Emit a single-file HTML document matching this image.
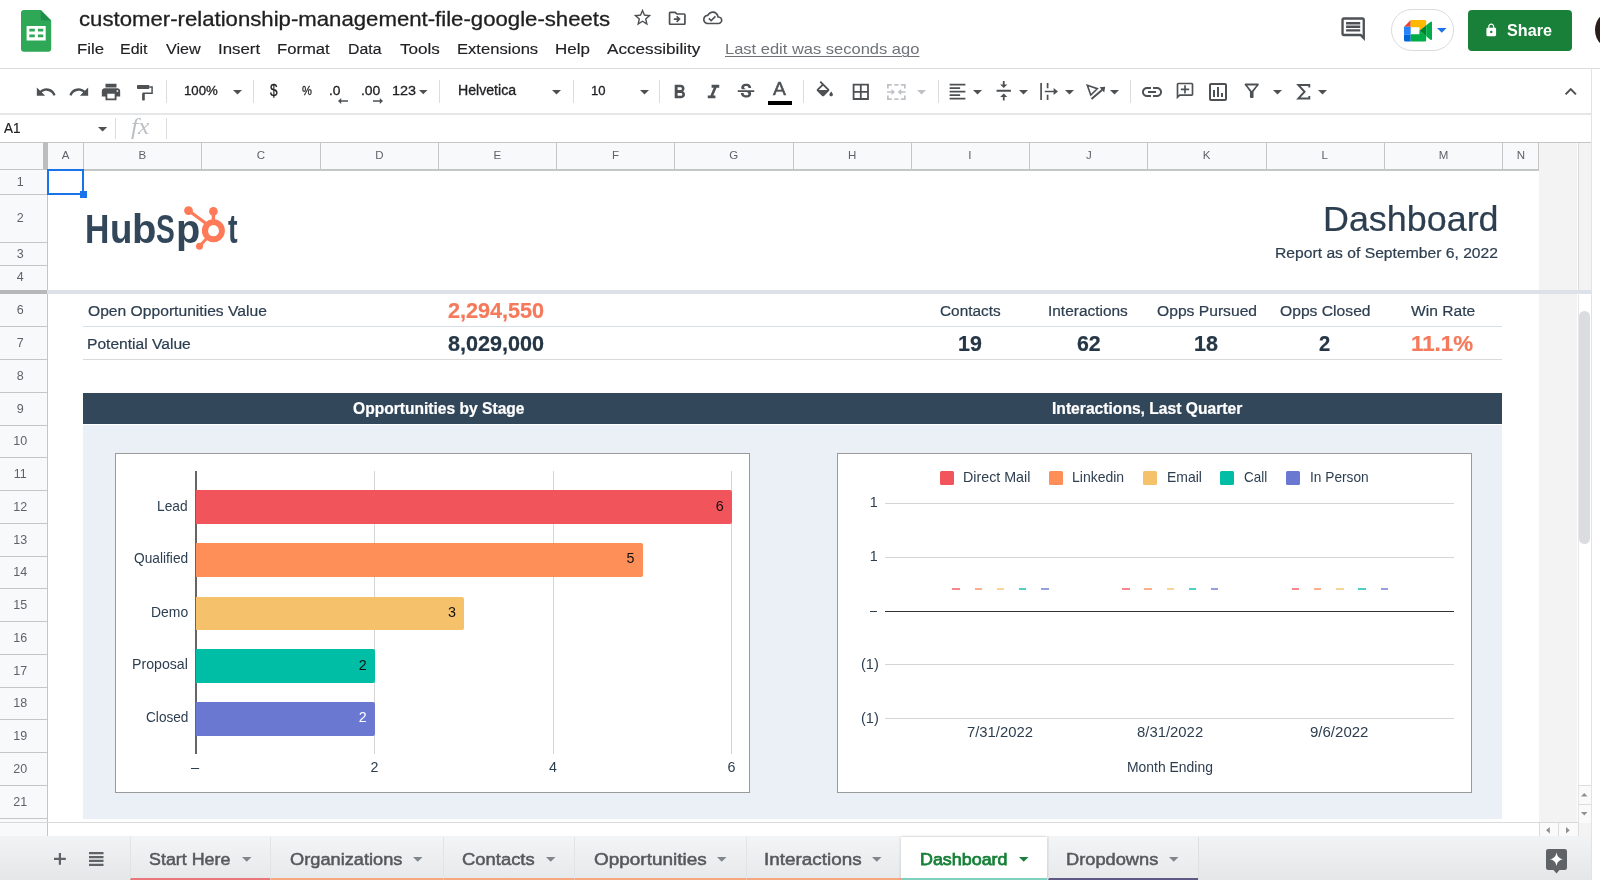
<!DOCTYPE html>
<html lang="en">
<head>
<meta charset="utf-8">
<title>customer-relationship-management-file-google-sheets - Google Sheets</title>
<style>
*{box-sizing:border-box;margin:0;padding:0}
html,body{width:1600px;height:880px;overflow:hidden;background:#fff;font-family:"Liberation Sans",Arial,sans-serif;color:#202124}
.t{position:absolute;display:block;white-space:nowrap;line-height:1;transform-origin:0 0}
.ic{position:absolute;display:block;overflow:visible}
.sep{position:absolute;width:1px;background:#dadce0}
.hl{position:absolute;height:1px}
.vl{position:absolute;width:1px}
#sheet-content>.t{-webkit-text-stroke-width:.22px}
#docs-menubar .t{-webkit-text-stroke-width:.15px}
</style>
</head>
<body>
<div id="docs-chrome" style="position:absolute;left:0;top:0;width:1600px;height:880px;will-change:transform">
<header id="docs-titlebar" style="position:absolute;left:0px;top:0px;width:1600px;height:68.5px;background:#fff;border-bottom:1px solid #dadce0;">
<svg class="ic" style="left:21.1px;top:9.5px;width:30.2px;height:41.7px;" viewBox="0 0 30.2 41.7"><path fill="#2ea856" d="M3 0h16.700l10.500 10.500v28.200a3 3 0 0 1-3 3H3a3 3 0 0 1-3-3V3a3 3 0 0 1 3-3z"/><path fill="#1e8f4a" d="M19.700 0l10.500 10.500h-8a2.500 2.500 0 0 1-2.500-2.500z"/><path fill="#fff" fill-rule="evenodd" d="M5.600 16.100h19.100v14.300H5.600zM8.300 18.800v2.800h5.500v-2.800zM16.900 18.800v2.800h5.400v-2.800zM8.300 24.500v2.800h5.500v-2.800zM16.900 24.500v2.800h5.400v-2.800z"/></svg>
<span class="t" style="left:78.9px;top:8.5px;color:#1f1f1f;font-size:20.2px;transform:scaleX(1.0982);-webkit-text-stroke:.3px #1f1f1f;">customer-relationship-management-file-google-sheets</span>
<svg class="ic" style="left:632.2px;top:7.2px;width:21px;height:21px;" viewBox="0 0 24 24"><path fill="#4e5154" d="M22 9.240l-7.190-.620L12 2 9.190 8.630 2 9.240l5.460 4.730L5.820 21 12 17.270 18.180 21l-1.630-7.030L22 9.240zM12 15.400l-3.760 2.270 1-4.280-3.320-2.880 4.380-.380L12 6.100l1.710 4.040 4.380.380-3.320 2.880 1 4.280L12 15.400z"/></svg>
<svg class="ic" style="left:667px;top:7.5px;width:20.5px;height:20.5px;" viewBox="0 0 24 24"><path fill="#4e5154" d="M20 6h-8l-2-2H4c-1.100 0-2 .900-2 2v12c0 1.100.900 2 2 2h16c1.100 0 2-.900 2-2V8c0-1.100-.900-2-2-2zm0 12H4V6h5.170l2 2H20v10zm-7.840-4H8v-2h4.160l-1.590-1.590L11.990 9 16 13.010 11.990 17l-1.410-1.410L12.160 14z"/></svg>
<svg class="ic" style="left:703.3px;top:7.6px;width:19.5px;height:19.5px;" viewBox="0 0 24 24"><path fill="#4e5154" d="M19.350 10.040C18.670 6.590 15.640 4 12 4 9.110 4 6.600 5.640 5.350 8.040 2.340 8.360 0 10.910 0 14c0 3.310 2.690 6 6 6h13c2.760 0 5-2.240 5-5 0-2.640-2.050-4.780-4.650-4.960zM19 18H6c-2.210 0-4-1.790-4-4 0-2.050 1.530-3.760 3.560-3.970l1.070-.110.500-.950C8.080 7.140 9.940 6 12 6c2.620 0 4.880 1.860 5.390 4.430l.300 1.500 1.530.110c1.560.100 2.780 1.410 2.780 2.960 0 1.650-1.350 3-3 3zm-9-3.820l-2.090-2.090L6.500 13.500 10 17l6.010-6.010-1.410-1.410z"/></svg>
<nav id="docs-menubar"><span class="t" style="left:77.0px;top:41.3px;color:#202124;font-size:15.2px;transform:scaleX(1.1031);">File</span><span class="t" style="left:120.15px;top:41.3px;color:#202124;font-size:15.2px;transform:scaleX(1.052);">Edit</span><span class="t" style="left:165.9px;top:41.3px;color:#202124;font-size:15.2px;transform:scaleX(1.065);">View</span><span class="t" style="left:217.59px;top:41.3px;color:#202124;font-size:15.2px;transform:scaleX(1.1095);">Insert</span><span class="t" style="left:277.2px;top:41.3px;color:#202124;font-size:15.2px;transform:scaleX(1.0965);">Format</span><span class="t" style="left:347.76px;top:41.3px;color:#202124;font-size:15.2px;transform:scaleX(1.0432);">Data</span><span class="t" style="left:399.5px;top:41.3px;color:#202124;font-size:15.2px;transform:scaleX(1.1238);">Tools</span><span class="t" style="left:456.61px;top:41.3px;color:#202124;font-size:15.2px;transform:scaleX(1.0923);">Extensions</span><span class="t" style="left:554.99px;top:41.3px;color:#202124;font-size:15.2px;transform:scaleX(1.1145);">Help</span><span class="t" style="left:606.8px;top:41.3px;color:#202124;font-size:15.2px;transform:scaleX(1.1286);">Accessibility</span></nav>
<span class="t" style="left:725.3px;top:41.3px;color:#6f7378;font-size:15px;transform:scaleX(1.0996);text-decoration:underline;text-decoration-thickness:1px;text-underline-offset:1.5px;">Last edit was seconds ago</span>
<svg class="ic" style="left:1339.1px;top:15.3px;width:28.3px;height:28.3px;" viewBox="0 0 24 24"><path fill="#4e5154" d="M21.990 4c0-1.100-.890-2-1.990-2H4c-1.100 0-2 .900-2 2v12c0 1.100.900 2 2 2h14l4 4-.010-18zM20 4v13.170L18.830 16H4V4h16zM6 12h12v2H6zm0-3h12v2H6zm0-3h12v2H6z"/></svg>
<div style="position:absolute;left:1391px;top:9px;width:63px;height:42px;border:1px solid #dadce0;border-radius:21px;background:#fff;"></div>
<svg class="ic" style="left:1404px;top:19.7px;width:28px;height:21.6px;" viewBox="0 0 28 21.6"><path fill="#ea4335" d="M6.700 0L0 6.700h6.700z"/><path fill="#2684fc" d="M0 6.700h6.700v8.200H0z"/><path fill="#0066da" d="M0 14.900h6.700v6.700H1.500A1.500 1.500 0 0 1 0 20.100z"/><path fill="#ffba00" d="M6.700 0h14a1.500 1.500 0 0 1 1.500 1.500v3.800l-6.800 5.500V7.300H6.700z"/><path fill="#00ac47" d="M6.700 14.300h8.700v-3.500l6.800 5.500v3.800a1.500 1.500 0 0 1-1.500 1.500h-14z"/><path fill="#00832d" d="M15.400 10.800l6.800-5.500v11z"/><path fill="#00ac47" d="M22.200 5.300l4.500-3.600c.5-.4 1.300 0 1.300.6v17c0 .7-.8 1-1.300.6l-4.500-3.600z"/></svg>
<svg class="ic" style="left:1436.95px;top:27.93px;width:9.5px;height:4.75px;" viewBox="0 0 9.5 4.75"><path fill="#1a73e8" d="M0 0h9.5l-4.75 4.75z"/></svg>
<div style="position:absolute;left:1468px;top:9.5px;width:104px;height:41.5px;background:#188038;border-radius:4px;"></div>
<svg class="ic" style="left:1483.5px;top:22.9px;width:14.5px;height:14.5px;" viewBox="0 0 24 24"><path fill="#fff" d="M18 8h-1V6c0-2.760-2.240-5-5-5S7 3.240 7 6v2H6c-1.100 0-2 .900-2 2v10c0 1.100.900 2 2 2h12c1.100 0 2-.900 2-2V10c0-1.100-.900-2-2-2zm-6 9c-1.100 0-2-.900-2-2s.900-2 2-2 2 .900 2 2-.900 2-2 2zm3.100-9H8.900V6c0-1.710 1.390-3.100 3.100-3.100 1.710 0 3.100 1.390 3.100 3.100v2z"/></svg>
<span class="t" style="left:1507.3px;top:21.8px;color:#fff;font-size:17px;font-weight:700;transform:scaleX(0.951);">Share</span>
<div style="position:absolute;left:1594.5px;top:10px;width:40px;height:40px;border-radius:50%;background:#2b1d1a;"></div>
</header>
<div id="docs-toolbar" style="position:absolute;left:0px;top:69px;width:1591px;height:46px;background:#fff;border-bottom:2px solid #e4e6e8;">
<svg class="ic" style="left:34.5px;top:11.5px;width:22px;height:22px;" viewBox="0 0 24 24"><path fill="#4e5154" d="M12.5 8c-2.65 0-5.05.99-6.9 2.6L2 7v9h9l-3.62-3.62c1.39-1.16 3.16-1.88 5.12-1.88 3.54 0 6.55 2.31 7.6 5.5l2.37-.78C21.08 11.03 17.15 8 12.5 8z"/></svg>
<svg class="ic" style="left:67.8px;top:11.5px;width:22px;height:22px;" viewBox="0 0 24 24"><path fill="#4e5154" d="M18.4 10.6C16.55 8.99 14.15 8 11.5 8c-4.65 0-8.58 3.03-9.96 7.22L3.9 16c1.05-3.19 4.05-5.5 7.6-5.5 1.95 0 3.73.72 5.12 1.88L13 16h9V7l-3.6 3.6z"/></svg>
<svg class="ic" style="left:100px;top:11.95px;width:22px;height:22px;" viewBox="0 0 24 24"><path fill="#4e5154" d="M19 8H5c-1.66 0-3 1.34-3 3v6h4v4h12v-4h4v-6c0-1.66-1.34-3-3-3zm-3 11H8v-5h8v5zm3-7c-.55 0-1-.45-1-1s.45-1 1-1 1 .45 1 1-.45 1-1 1zm-1-9H6v4h12V3z"/></svg>
<svg class="ic" style="left:136.75px;top:15.6px;width:16px;height:15.4px;" viewBox="0 0 16 15.4"><rect fill="#4e5154" x="0" y="0" width="12.300" height="4" rx=".800"/><path fill="none" stroke="#4e5154" stroke-width="1.500" d="M12.300 2H15.100V8.300H6.400V9"/><rect fill="#4e5154" x="5.100" y="8.300" width="2.700" height="7.100" rx=".600"/></svg>
<i class="sep" style="left:165.5px;top:11.299999999999997px;height:22.500px"></i>
<i class="sep" style="left:252.5px;top:11.299999999999997px;height:22.500px"></i>
<i class="sep" style="left:438.8px;top:11.299999999999997px;height:22.500px"></i>
<i class="sep" style="left:572.5px;top:11.299999999999997px;height:22.500px"></i>
<i class="sep" style="left:659.3px;top:11.299999999999997px;height:22.500px"></i>
<i class="sep" style="left:803px;top:11.299999999999997px;height:22.500px"></i>
<i class="sep" style="left:937.5px;top:11.299999999999997px;height:22.500px"></i>
<i class="sep" style="left:1130px;top:11.299999999999997px;height:22.500px"></i>
<span class="t" style="left:183.83px;top:15.1px;color:#202124;font-size:13.6px;transform:scaleX(0.9709);-webkit-text-stroke:.3px #202124;">100%</span>
<svg class="ic" style="left:233.1px;top:20.55px;width:9px;height:4.5px;" viewBox="0 0 9 4.5"><path fill="#4e5154" d="M0 0h9l-4.5 4.5z"/></svg>
<span class="t" style="left:270.3px;top:12.75px;color:#202124;font-size:16.5px;transform:scaleX(0.8222);-webkit-text-stroke:.3px #202124;">$</span>
<span class="t" style="left:301.8px;top:15.1px;color:#202124;font-size:13.6px;transform:scaleX(0.8167);-webkit-text-stroke:.3px #202124;">%</span>
<span class="t" style="left:328.59px;top:15.1px;color:#202124;font-size:13.6px;transform:scaleX(1.0114);-webkit-text-stroke:.3px #202124;">.0</span>
<svg class="ic" style="left:337.5px;top:29px;width:10px;height:6px;" viewBox="0 0 10 6"><path fill="#4e5154" d="M3.200 0L0 3l3.200 3V3.700H10V2.300H3.200z"/></svg>
<span class="t" style="left:360.77px;top:15.1px;color:#202124;font-size:13.6px;transform:scaleX(1.0253);-webkit-text-stroke:.3px #202124;">.00</span>
<svg class="ic" style="left:372.8px;top:29px;width:10px;height:6px;" viewBox="0 0 10 6"><path fill="#4e5154" d="M6.800 0L10 3 6.800 6V3.700H0V2.300h6.800z"/></svg>
<span class="t" style="left:391.54px;top:15.1px;color:#202124;font-size:13.6px;transform:scaleX(1.0606);-webkit-text-stroke:.3px #202124;">123</span>
<svg class="ic" style="left:418.85px;top:20.67px;width:8.5px;height:4.25px;" viewBox="0 0 8.5 4.25"><path fill="#4e5154" d="M0 0h8.5l-4.25 4.25z"/></svg>
<span class="t" style="left:457.78px;top:15.2px;color:#202124;font-size:13.8px;transform:scaleX(1.0237);-webkit-text-stroke:.3px #202124;">Helvetica</span>
<svg class="ic" style="left:552.3px;top:20.55px;width:9px;height:4.5px;" viewBox="0 0 9 4.5"><path fill="#4e5154" d="M0 0h9l-4.5 4.5z"/></svg>
<span class="t" style="left:590.54px;top:15.1px;color:#202124;font-size:13.6px;transform:scaleX(0.9615);-webkit-text-stroke:.3px #202124;">10</span>
<svg class="ic" style="left:639.9px;top:20.55px;width:9px;height:4.5px;" viewBox="0 0 9 4.5"><path fill="#4e5154" d="M0 0h9l-4.5 4.5z"/></svg>
<svg class="ic" style="left:667.5px;top:12px;width:23px;height:23px;" viewBox="0 0 24 24"><path fill="#4e5154" d="M15.6 10.79c.97-.67 1.65-1.77 1.65-2.79 0-2.26-1.75-4-4-4H7v14h7.04c2.09 0 3.71-1.7 3.71-3.79 0-1.52-.86-2.82-2.15-3.42zM10 6.5h3c.83 0 1.5.67 1.5 1.5s-.67 1.5-1.5 1.5h-3v-3zm3.5 9H10v-3h3.5c.83 0 1.5.67 1.5 1.5s-.67 1.5-1.5 1.5z"/></svg>
<svg class="ic" style="left:701.5px;top:12px;width:23px;height:23px;" viewBox="0 0 24 24"><path fill="#4e5154" d="M10 4v3h2.21l-3.42 8H6v3h8v-3h-2.21l3.42-8H18V4z"/></svg>
<svg class="ic" style="left:735.4px;top:12.3px;width:22px;height:22px;" viewBox="0 0 24 24"><path fill="#4e5154" d="M7.24 8.75c-.26-.48-.39-1.03-.39-1.67 0-.61.13-1.16.4-1.67.26-.5.63-.93 1.11-1.29.48-.35 1.05-.63 1.7-.83.66-.19 1.39-.29 2.18-.29.81 0 1.54.11 2.21.34.66.22 1.23.54 1.69.94.47.4.83.88 1.08 1.43.25.55.38 1.15.38 1.81h-3.01c0-.31-.05-.59-.15-.85-.09-.27-.24-.49-.44-.68-.2-.19-.45-.33-.75-.44-.3-.1-.66-.16-1.06-.16-.39 0-.74.04-1.03.13-.29.09-.53.21-.72.36-.19.16-.34.34-.44.55-.1.21-.15.43-.15.66 0 .48.25.88.74 1.21.38.25.77.48 1.41.7H7.39c-.05-.08-.11-.17-.15-.25zM21 12v-2H3v2h9.62c.18.07.4.14.55.2.37.17.66.34.87.51.21.17.35.36.43.57.07.2.11.43.11.69 0 .23-.05.45-.14.66-.09.2-.23.38-.42.53-.19.15-.42.26-.71.35-.29.08-.63.13-1.01.13-.43 0-.83-.04-1.18-.13s-.66-.23-.91-.42c-.25-.19-.45-.44-.59-.75-.14-.31-.25-.76-.25-1.21H6.4c0 .55.08 1.13.24 1.58.16.45.37.85.65 1.21.28.35.6.66.98.92.37.26.78.48 1.22.65.44.17.9.3 1.38.39.48.08.96.13 1.44.13.8 0 1.53-.09 2.18-.28s1.21-.45 1.67-.79c.46-.34.82-.77 1.07-1.27s.38-1.07.38-1.71c0-.6-.1-1.14-.31-1.61-.05-.11-.11-.23-.17-.33H21z"/></svg>
<span class="t" style="left:773.3px;top:11.2px;color:#4e5154;font-size:18px;transform:scaleX(1.075);-webkit-text-stroke:.5px #4e5154;">A</span>
<div style="position:absolute;left:768.2px;top:32px;width:24px;height:4px;background:#000;"></div>
<svg class="ic" style="left:814.3px;top:12.3px;width:21.7px;height:21.7px;" viewBox="0 0 24 24"><path fill="#4e5154" d="M16.56 8.94L7.62 0 6.21 1.41l2.38 2.38-5.15 5.15c-.59.59-.59 1.54 0 2.12l5.5 5.5c.29.29.68.44 1.06.44s.77-.15 1.06-.44l5.5-5.5c.59-.58.59-1.53 0-2.12zM5.21 10L10 5.21 14.79 10H5.21zM19 11.5s-2 2.17-2 3.5c0 1.1.9 2 2 2s2-.9 2-2c0-1.33-2-3.5-2-3.5z"/></svg>
<svg class="ic" style="left:849.6px;top:11.6px;width:21.6px;height:21.6px;" viewBox="0 0 24 24"><path fill="#4e5154" d="M3 3v18h18V3H3zm8 16H5v-6h6v6zm0-8H5V5h6v6zm8 8h-6v-6h6v6zm0-8h-6V5h6v6z"/></svg>
<svg class="ic" style="left:886.9px;top:14.5px;width:18.7px;height:16px;" viewBox="0 0 18.7 16"><g fill="none" stroke="#bdc1c6" stroke-width="1.700"><path d="M.85 4.600V.85h4M7.300 .85h4.100M13.850 .85h4v3.750M.85 11.400v3.750h4M7.300 15.150h4.100M13.850 15.150h4v-3.750"/></g><path fill="#bdc1c6" d="M0 7.200h4.500V5.100L8 8 4.500 10.900V8.800H0zM18.700 7.200h-4.500V5.100L10.700 8l3.500 2.900V8.800h4.500z"/></svg>
<svg class="ic" style="left:917.3px;top:20.55px;width:9px;height:4.5px;" viewBox="0 0 9 4.5"><path fill="#bdc1c6" d="M0 0h9l-4.5 4.5z"/></svg>
<svg class="ic" style="left:947.4px;top:11.5px;width:21px;height:21px;" viewBox="0 0 24 24"><path fill="#4e5154" d="M15 15H3v2h12v-2zm0-8H3v2h12V7zM3 13h18v-2H3v2zm0 8h18v-2H3v2zM3 3v2h18V3H3z"/></svg>
<svg class="ic" style="left:973px;top:20.55px;width:9px;height:4.5px;" viewBox="0 0 9 4.5"><path fill="#4e5154" d="M0 0h9l-4.5 4.5z"/></svg>
<svg class="ic" style="left:993px;top:11.3px;width:21.5px;height:21.5px;" viewBox="0 0 24 24"><path fill="#4e5154" d="M8 19h3v4h2v-4h3l-4-4-4 4zm8-14h-3V1h-2v4H8l4 4 4-4zM4 11v2h16v-2H4z"/></svg>
<svg class="ic" style="left:1018.5px;top:20.55px;width:9px;height:4.5px;" viewBox="0 0 9 4.5"><path fill="#4e5154" d="M0 0h9l-4.5 4.5z"/></svg>
<svg class="ic" style="left:1040px;top:13.5px;width:18px;height:17px;" viewBox="0 0 18 17"><g fill="none" stroke="#4e5154" stroke-width="1.700"><path d="M1.100 0v17M7.600 0v5.200M7.600 11.800V17M4.800 8.500h11"/></g><path fill="#4e5154" d="M13.600 5l4.400 3.500-4.400 3.500z"/></svg>
<svg class="ic" style="left:1064.5px;top:20.55px;width:9px;height:4.5px;" viewBox="0 0 9 4.5"><path fill="#4e5154" d="M0 0h9l-4.5 4.5z"/></svg>
<svg class="ic" style="left:1086px;top:12.5px;width:19px;height:19px;" viewBox="0 0 19 19"><g fill="none" stroke="#4e5154" stroke-linejoin="miter"><path stroke-width="1.600" d="M1.300 3.300L11.300 6.700 4.800 13z"/><path stroke-width="2" d="M5.500 17L16.300 7.700"/></g><path fill="#4e5154" d="M13.600 5.300L19.200 4.800 18.200 10.400z"/></svg>
<svg class="ic" style="left:1110px;top:20.55px;width:9px;height:4.5px;" viewBox="0 0 9 4.5"><path fill="#4e5154" d="M0 0h9l-4.5 4.5z"/></svg>
<svg class="ic" style="left:1140px;top:10.5px;width:24px;height:24px;" viewBox="0 0 24 24"><path fill="#4e5154" d="M3.9 12c0-1.71 1.39-3.1 3.1-3.1h4V7H7c-2.76 0-5 2.24-5 5s2.24 5 5 5h4v-1.9H7c-1.71 0-3.1-1.39-3.1-3.1zM8 13h8v-2H8v2zm9-6h-4v1.9h4c1.71 0 3.1 1.39 3.1 3.1s-1.39 3.1-3.1 3.1h-4V17h4c2.76 0 5-2.24 5-5s-2.24-5-5-5z"/></svg>
<svg class="ic" style="left:1174.8px;top:12.4px;width:20px;height:20px;transform:scaleX(-1);" viewBox="0 0 24 24"><path fill="#4e5154" d="M22 4c0-1.1-.9-2-2-2H4c-1.1 0-2 .9-2 2v12c0 1.1.9 2 2 2h14l4 4V4zm-2 13.17L18.83 16H4V4h16v13.17zM13 5h-2v4H7v2h4v4h2v-4h4V9h-4z"/></svg>
<svg class="ic" style="left:1206.1px;top:10.6px;width:24px;height:24px;" viewBox="0 0 24 24"><path fill="#4e5154" d="M9 17H7v-7h2v7zm4 0h-2V7h2v10zm4 0h-2v-4h2v4zm2 2H5V5h14v14zm0-16H5c-1.1 0-2 .9-2 2v14c0 1.1.9 2 2 2h14c1.1 0 2-.9 2-2V5c0-1.1-.9-2-2-2z"/></svg>
<svg class="ic" style="left:1241.2px;top:11.3px;width:21.5px;height:21.5px;" viewBox="0 0 24 24"><path fill="#4e5154" d="M7 6h10l-5.01 6.3L7 6zm-2.75-.39C6.27 8.2 10 13 10 13v6c0 .55.45 1 1 1h2c.55 0 1-.45 1-1v-6s3.72-4.8 5.74-7.39c.51-.66.04-1.61-.79-1.61H5.04c-.83 0-1.3.95-.79 1.61z"/></svg>
<svg class="ic" style="left:1272.5px;top:20.55px;width:9px;height:4.5px;" viewBox="0 0 9 4.5"><path fill="#4e5154" d="M0 0h9l-4.5 4.5z"/></svg>
<svg class="ic" style="left:1297px;top:14.7px;width:13px;height:15.5px;" viewBox="0 0 13 15.5"><path fill="none" stroke="#4e5154" stroke-width="1.900" stroke-linejoin="miter" d="M12.300 3.400V1H1.300l6.300 6.750L1.300 14.500h11v-2.400"/></svg>
<svg class="ic" style="left:1318px;top:20.55px;width:9px;height:4.5px;" viewBox="0 0 9 4.5"><path fill="#4e5154" d="M0 0h9l-4.5 4.5z"/></svg>
<svg class="ic" style="left:1558.5px;top:10.5px;width:23.5px;height:23.5px;" viewBox="0 0 24 24"><path fill="#4e5154" d="M12 8l-6 6 1.41 1.410L12 10.830l4.590 4.580L18 14z"/></svg>
</div>
<div id="formula-bar" style="position:absolute;left:0px;top:115px;width:1591px;height:27px;background:#fff;">
<span class="t" style="left:3.9px;top:5.95px;color:#202124;font-size:14.5px;transform:scaleX(0.9281);-webkit-text-stroke:.2px #202124;">A1</span>
<svg class="ic" style="left:98.3px;top:12.3px;width:9.2px;height:4.6px;" viewBox="0 0 9.2 4.6"><path fill="#4e5154" d="M0 0h9.2l-4.6 4.6z"/></svg>
<i class="sep" style="left:115px;top:3px;height:21px"></i>
<span class="t" style="left:130.5px;top:-0.5px;color:#bdc1c6;font-size:23px;font-style:italic;font-family:'Liberation Serif',serif;transform:scaleX(1.1098);">fx</span>
<i class="sep" style="left:166px;top:3px;height:21px"></i>
</div>
<main id="grid-container" style="position:absolute;left:0px;top:0px;width:1591px;height:836px;">
<div style="position:absolute;left:1538.8px;top:142px;width:38.7px;height:681px;background:#f3f3f3;"></div>
<div style="position:absolute;left:1577.5px;top:142px;width:14px;height:148.5px;background:#f3f3f3;border-left:1px solid #dadada;"></div>
<div style="position:absolute;left:1577.5px;top:294.5px;width:14px;height:528.5px;background:#fff;border-left:1px solid #e6e6e6;"></div>
<div style="position:absolute;left:0px;top:142px;width:1538.8px;height:28px;background:#f8f9fa;"></div>
<div style="position:absolute;left:0px;top:141.6px;width:1591px;height:1.3px;background:#c4c7c5;"></div>
<div style="position:absolute;left:0px;top:169.3px;width:1538.8px;height:1.3px;background:#c4c7c5;"></div>
<div style="position:absolute;left:42.6px;top:142px;width:5.2px;height:28px;background:#bdbdbd;"></div>
<div id="col-headers"><i class="vl" style="left:83px;top:142px;height:28px;background:#c4c7c5"></i><span class="t" style="left:61.65px;top:150.05px;color:#5f6368;font-size:11.5px;transform:scaleX(1);">A</span><i class="vl" style="left:201.1px;top:142px;height:28px;background:#c4c7c5"></i><span class="t" style="left:138.55px;top:150.05px;color:#5f6368;font-size:11.5px;transform:scaleX(1);">B</span><i class="vl" style="left:319.5px;top:142px;height:28px;background:#c4c7c5"></i><span class="t" style="left:256.8px;top:150.05px;color:#5f6368;font-size:11.5px;transform:scaleX(1);">C</span><i class="vl" style="left:437.9px;top:142px;height:28px;background:#c4c7c5"></i><span class="t" style="left:375.2px;top:150.05px;color:#5f6368;font-size:11.5px;transform:scaleX(1);">D</span><i class="vl" style="left:556.1px;top:142px;height:28px;background:#c4c7c5"></i><span class="t" style="left:493.5px;top:150.05px;color:#5f6368;font-size:11.5px;transform:scaleX(1);">E</span><i class="vl" style="left:674.1px;top:142px;height:28px;background:#c4c7c5"></i><span class="t" style="left:612.1px;top:150.05px;color:#5f6368;font-size:11.5px;transform:scaleX(1);">F</span><i class="vl" style="left:792.5px;top:142px;height:28px;background:#c4c7c5"></i><span class="t" style="left:729.3px;top:150.05px;color:#5f6368;font-size:11.5px;transform:scaleX(1);">G</span><i class="vl" style="left:910.7px;top:142px;height:28px;background:#c4c7c5"></i><span class="t" style="left:848.1px;top:150.05px;color:#5f6368;font-size:11.5px;transform:scaleX(1);">H</span><i class="vl" style="left:1029px;top:142px;height:28px;background:#c4c7c5"></i><span class="t" style="left:968.35px;top:150.05px;color:#5f6368;font-size:11.5px;transform:scaleX(1);">I</span><i class="vl" style="left:1147.2px;top:142px;height:28px;background:#c4c7c5"></i><span class="t" style="left:1086.1px;top:150.05px;color:#5f6368;font-size:11.5px;transform:scaleX(1);">J</span><i class="vl" style="left:1265.5px;top:142px;height:28px;background:#c4c7c5"></i><span class="t" style="left:1202.85px;top:150.05px;color:#5f6368;font-size:11.5px;transform:scaleX(1);">K</span><i class="vl" style="left:1383.7px;top:142px;height:28px;background:#c4c7c5"></i><span class="t" style="left:1321.6px;top:150.05px;color:#5f6368;font-size:11.5px;transform:scaleX(1);">L</span><i class="vl" style="left:1502px;top:142px;height:28px;background:#c4c7c5"></i><span class="t" style="left:1438.85px;top:150.05px;color:#5f6368;font-size:11.5px;transform:scaleX(1);">M</span><i class="vl" style="left:1538.3px;top:142px;height:28px;background:#c4c7c5"></i><span class="t" style="left:1516.65px;top:150.05px;color:#5f6368;font-size:11.5px;transform:scaleX(1);">N</span></div>
<div style="position:absolute;left:0px;top:170px;width:47.3px;height:666px;background:#f8f9fa;"></div>
<i class="vl" style="left:47px;top:170px;height:666px;background:#c4c7c5"></i>
<div id="row-headers"><i class="hl" style="left:0;top:194.1px;width:47px;background:#c4c7c5"></i><span class="t" style="left:16.8px;top:176.15px;color:#5f6368;font-size:12.5px;transform:scaleX(1);">1</span><i class="hl" style="left:0;top:241.9px;width:47px;background:#c4c7c5"></i><span class="t" style="left:16.8px;top:212.35px;color:#5f6368;font-size:12.5px;transform:scaleX(1);">2</span><i class="hl" style="left:0;top:265px;width:47px;background:#c4c7c5"></i><span class="t" style="left:16.8px;top:247.8px;color:#5f6368;font-size:12.5px;transform:scaleX(1);">3</span><span class="t" style="left:16.8px;top:271.4px;color:#5f6368;font-size:12.5px;transform:scaleX(1);">4</span><i class="hl" style="left:0;top:326.45px;width:47px;background:#c4c7c5"></i><span class="t" style="left:16.8px;top:304.43px;color:#5f6368;font-size:12.5px;transform:scaleX(1);">6</span><i class="hl" style="left:0;top:359.2px;width:47px;background:#c4c7c5"></i><span class="t" style="left:16.8px;top:337.18px;color:#5f6368;font-size:12.5px;transform:scaleX(1);">7</span><i class="hl" style="left:0;top:391.95px;width:47px;background:#c4c7c5"></i><span class="t" style="left:16.8px;top:369.93px;color:#5f6368;font-size:12.5px;transform:scaleX(1);">8</span><i class="hl" style="left:0;top:424.7px;width:47px;background:#c4c7c5"></i><span class="t" style="left:16.8px;top:402.68px;color:#5f6368;font-size:12.5px;transform:scaleX(1);">9</span><i class="hl" style="left:0;top:457.45px;width:47px;background:#c4c7c5"></i><span class="t" style="left:13.32px;top:435.43px;color:#5f6368;font-size:12.5px;transform:scaleX(1);">10</span><i class="hl" style="left:0;top:490.2px;width:47px;background:#c4c7c5"></i><span class="t" style="left:13.79px;top:468.18px;color:#5f6368;font-size:12.5px;transform:scaleX(1);">11</span><i class="hl" style="left:0;top:522.95px;width:47px;background:#c4c7c5"></i><span class="t" style="left:13.32px;top:500.93px;color:#5f6368;font-size:12.5px;transform:scaleX(1);">12</span><i class="hl" style="left:0;top:555.7px;width:47px;background:#c4c7c5"></i><span class="t" style="left:13.32px;top:533.68px;color:#5f6368;font-size:12.5px;transform:scaleX(1);">13</span><i class="hl" style="left:0;top:588.45px;width:47px;background:#c4c7c5"></i><span class="t" style="left:13.32px;top:566.43px;color:#5f6368;font-size:12.5px;transform:scaleX(1);">14</span><i class="hl" style="left:0;top:621.2px;width:47px;background:#c4c7c5"></i><span class="t" style="left:13.32px;top:599.18px;color:#5f6368;font-size:12.5px;transform:scaleX(1);">15</span><i class="hl" style="left:0;top:653.95px;width:47px;background:#c4c7c5"></i><span class="t" style="left:13.32px;top:631.93px;color:#5f6368;font-size:12.5px;transform:scaleX(1);">16</span><i class="hl" style="left:0;top:686.7px;width:47px;background:#c4c7c5"></i><span class="t" style="left:13.32px;top:664.68px;color:#5f6368;font-size:12.5px;transform:scaleX(1);">17</span><i class="hl" style="left:0;top:719.45px;width:47px;background:#c4c7c5"></i><span class="t" style="left:13.32px;top:697.43px;color:#5f6368;font-size:12.5px;transform:scaleX(1);">18</span><i class="hl" style="left:0;top:752.2px;width:47px;background:#c4c7c5"></i><span class="t" style="left:13.32px;top:730.18px;color:#5f6368;font-size:12.5px;transform:scaleX(1);">19</span><i class="hl" style="left:0;top:784.95px;width:47px;background:#c4c7c5"></i><span class="t" style="left:13.32px;top:762.93px;color:#5f6368;font-size:12.5px;transform:scaleX(1);">20</span><i class="hl" style="left:0;top:817.7px;width:47px;background:#c4c7c5"></i><span class="t" style="left:13.32px;top:795.68px;color:#5f6368;font-size:12.5px;transform:scaleX(1);">21</span></div>
<i class="hl" style="left:0;top:822.3px;width:1591px;background:#d9d9d9"></i>
<div style="position:absolute;left:47.3px;top:290.3px;width:1543.7px;height:4.2px;background:#dde2ea;"></div>
<div style="position:absolute;left:0px;top:289.5px;width:47.3px;height:4.7px;background:#b7b7b7;"></div>
<div style="position:absolute;left:47.3px;top:169.3px;width:37px;height:26px;border:2px solid #1a73e8;"></div>
<div style="position:absolute;left:80.2px;top:191px;width:6.5px;height:6.5px;background:#1a73e8;"></div>
<div style="position:absolute;left:1579.3px;top:311px;width:10.7px;height:233px;background:#dadce0;border-radius:5.500px;"></div>
<div style="position:absolute;left:1577.5px;top:785px;width:13.5px;height:37.5px;background:#fafafa;border-top:1px solid #dcdcdc;border-left:1px solid #e2e2e2;"></div>
<div style="position:absolute;left:1577.5px;top:803.5px;width:13.5px;height:1px;background:#dcdcdc;"></div>
<svg class="ic" style="left:1581px;top:792.5px;width:6.5px;height:3.5px;" viewBox="0 0 6.5 3.5"><path fill="#8f8f8f" d="M0 3.500L3.250 0l3.250 3.500z"/></svg>
<svg class="ic" style="left:1581px;top:811.5px;width:6.5px;height:3.5px;" viewBox="0 0 6.5 3.5"><path fill="#8f8f8f" d="M0 0h6.500L3.250 3.500z"/></svg>
<div style="position:absolute;left:1539px;top:823px;width:38.5px;height:13px;background:#fafafa;border-left:1px solid #dcdcdc;"></div>
<div style="position:absolute;left:1558px;top:823px;width:1px;height:13px;background:#dcdcdc;"></div>
<div style="position:absolute;left:1577.5px;top:823px;width:13.5px;height:13px;background:#f3f3f3;border-left:1px solid #dcdcdc;"></div>
<svg class="ic" style="left:1546.3px;top:826.5px;width:3.8px;height:6.5px;" viewBox="0 0 3.8 6.5"><path fill="#8f8f8f" d="M3.800 0v6.500L0 3.250z"/></svg>
<svg class="ic" style="left:1565.5px;top:826.5px;width:3.8px;height:6.5px;" viewBox="0 0 3.8 6.5"><path fill="#8f8f8f" d="M0 0v6.500L3.800 3.250z"/></svg>
<section id="sheet-content" style="position:absolute;left:47.5px;top:170px;width:1491.3px;height:653px;">
<div id="hubspot-logo" aria-label="HubSpot"><span class="t" style="left:37.7px;top:39.6px;color:#33475b;font-size:39.8px;font-weight:700;transform:scaleX(0.848);">H</span><span class="t" style="left:62.26px;top:39.6px;color:#33475b;font-size:39.8px;font-weight:700;transform:scaleX(0.92);">u</span><span class="t" style="left:84.39px;top:39.6px;color:#33475b;font-size:39.8px;font-weight:700;transform:scaleX(1.0048);">b</span><span class="t" style="left:108.79px;top:39.6px;color:#33475b;font-size:39.8px;font-weight:700;transform:scaleX(0.7083);">S</span><span class="t" style="left:128.5px;top:39.6px;color:#33475b;font-size:39.8px;font-weight:700;transform:scaleX(1.0);">p</span><span class="t" style="left:155.5px;top:40.4px;color:#ff7a59;font-size:38.2px;transform:scaleX(1.0);">o</span><span class="t" style="left:180.9px;top:39.6px;color:#33475b;font-size:39.8px;font-weight:700;transform:scaleX(0.7231);">t</span><svg class="ic" style="left:132.5px;top:33px;width:50px;height:50px;" viewBox="0 0 50 50"><g fill="none" stroke="#ff7a59"><circle cx="33.400" cy="27.700" r="8.550" stroke-width="5.900"/><path d="M33.400 18V9" stroke-width="3.400"/><path d="M27 21.200L9.500 8.300" stroke-width="3.200"/><path d="M27.300 34.700L20.200 42.500" stroke-width="3"/></g><circle fill="#ff7a59" cx="33.400" cy="8.400" r="4.300"/><circle fill="#ff7a59" cx="8.500" cy="7.600" r="4.400"/><circle fill="#ff7a59" cx="19.500" cy="43.300" r="3.500"/></svg></div>
<span class="t" style="left:1275.46px;top:31.3px;color:#2d3e50;font-size:35.2px;transform:scaleX(1.0197);">Dashboard</span>
<span class="t" style="left:1227.68px;top:74.7px;color:#2d3e50;font-size:15.4px;transform:scaleX(1.0181);">Report as of September 6, 2022</span>
<span class="t" style="left:40.7px;top:132.7px;color:#2d3e50;font-size:15.4px;transform:scaleX(1.0165);">Open Opportunities Value</span>
<span class="t" style="left:39.69px;top:165.6px;color:#2d3e50;font-size:15.4px;transform:scaleX(1.0136);">Potential Value</span>
<span class="t" style="left:400.7px;top:131.1px;color:#f5795b;font-size:21.4px;font-weight:700;transform:scaleX(1.0098);">2,294,550</span>
<span class="t" style="left:400.7px;top:163.6px;color:#253646;font-size:21.4px;font-weight:700;transform:scaleX(1.0098);">8,029,000</span>
<span class="t" style="left:892.2px;top:132.7px;color:#2d3e50;font-size:15.4px;transform:scaleX(0.9977);">Contacts</span>
<span class="t" style="left:1000.5px;top:132.7px;color:#2d3e50;font-size:15.4px;transform:scaleX(1.003);">Interactions</span>
<span class="t" style="left:1109.6px;top:132.7px;color:#2d3e50;font-size:15.4px;transform:scaleX(1.0171);">Opps Pursued</span>
<span class="t" style="left:1232.5px;top:132.7px;color:#2d3e50;font-size:15.4px;transform:scaleX(1.018);">Opps Closed</span>
<span class="t" style="left:1363.7px;top:132.7px;color:#2d3e50;font-size:15.4px;transform:scaleX(1.0138);">Win Rate</span>
<span class="t" style="left:910.5px;top:163.6px;color:#253646;font-size:21.4px;font-weight:700;transform:scaleX(1.0002);">19</span>
<span class="t" style="left:1029.1px;top:163.6px;color:#253646;font-size:21.4px;font-weight:700;transform:scaleX(0.996);">62</span>
<span class="t" style="left:1146.8px;top:163.6px;color:#253646;font-size:21.4px;font-weight:700;transform:scaleX(1.0045);">18</span>
<span class="t" style="left:1271.8px;top:163.6px;color:#253646;font-size:21.4px;font-weight:700;transform:scaleX(0.9417);">2</span>
<span class="t" style="left:1363.96px;top:163.6px;color:#f5795b;font-size:21.4px;font-weight:700;transform:scaleX(1.0436);">11.1%</span>
<div style="position:absolute;left:35.8px;top:156.3px;width:1419.2px;height:1.2px;background:#d7dfe9;"></div>
<div style="position:absolute;left:35.8px;top:189px;width:1419.2px;height:1px;background:#d9d9d9;"></div>
<div style="position:absolute;left:35.8px;top:223.2px;width:1419.2px;height:31.3px;background:#33475b;"></div>
<div style="position:absolute;left:35.8px;top:254.5px;width:1419.2px;height:394px;background:#eaf0f6;"></div>
<span class="t" style="left:305.0px;top:230.0px;color:#fff;font-size:16.2px;font-weight:700;transform:scaleX(0.9631);">Opportunities by Stage</span>
<span class="t" style="left:1004.03px;top:230.0px;color:#fff;font-size:16.2px;font-weight:700;transform:scaleX(0.9659);">Interactions, Last Quarter</span>
<figure id="chart-opps" style="position:absolute;left:67.5px;top:283px;width:635px;height:340px;background:#fff;border:1px solid #9a9a9a;">
<i class="vl" style="left:258px;top:17px;height:283px;background:#d5d5d5"></i>
<i class="vl" style="left:436.5px;top:17px;height:283px;background:#d5d5d5"></i>
<i class="vl" style="left:615px;top:17px;height:283px;background:#d5d5d5"></i>
<i class="vl" style="left:79px;top:17px;height:283px;width:2px;background:#666"></i>
<div style="position:absolute;left:80px;top:36px;width:536px;height:34px;background:#f2545b;border-radius:0 2px 2px 0;"></div>
<span class="t" style="left:41.34px;top:44.65px;color:#2d3e50;font-size:14.3px;transform:scaleX(0.9626);">Lead</span>
<span class="t" style="left:599.75px;top:44.85px;color:#111;font-size:14.3px;transform:scaleX(1);">6</span>
<div style="position:absolute;left:80px;top:89px;width:446.75px;height:34px;background:#ff8f59;border-radius:0 2px 2px 0;"></div>
<span class="t" style="left:17.8px;top:97.25px;color:#2d3e50;font-size:14.3px;transform:scaleX(0.9597);">Qualified</span>
<span class="t" style="left:510.5px;top:97.45px;color:#111;font-size:14.3px;transform:scaleX(1);">5</span>
<div style="position:absolute;left:80px;top:143px;width:268.25px;height:33px;background:#f5c26b;border-radius:0 2px 2px 0;"></div>
<span class="t" style="left:34.83px;top:150.65px;color:#2d3e50;font-size:14.3px;transform:scaleX(0.9735);">Demo</span>
<span class="t" style="left:332.0px;top:150.85px;color:#111;font-size:14.3px;transform:scaleX(1);">3</span>
<div style="position:absolute;left:80px;top:195px;width:179px;height:34px;background:#00bda5;border-radius:0 2px 2px 0;"></div>
<span class="t" style="left:16.31px;top:203.35px;color:#2d3e50;font-size:14.3px;transform:scaleX(0.99);">Proposal</span>
<span class="t" style="left:242.75px;top:203.55px;color:#111;font-size:14.3px;transform:scaleX(1);">2</span>
<div style="position:absolute;left:80px;top:248px;width:179px;height:34px;background:#6a78d1;border-radius:0 2px 2px 0;"></div>
<span class="t" style="left:29.5px;top:255.95px;color:#2d3e50;font-size:14.3px;transform:scaleX(0.9539);">Closed</span>
<span class="t" style="left:242.75px;top:256.15px;color:#fff;font-size:14.3px;transform:scaleX(1);">2</span>
<span class="t" style="left:75.3px;top:305.85px;color:#2d3e50;font-size:14.3px;transform:scaleX(1.025);">–</span>
<span class="t" style="left:254.5px;top:305.85px;color:#2d3e50;font-size:14.3px;transform:scaleX(1);">2</span>
<span class="t" style="left:433.0px;top:305.85px;color:#2d3e50;font-size:14.3px;transform:scaleX(1);">4</span>
<span class="t" style="left:611.5px;top:305.85px;color:#2d3e50;font-size:14.3px;transform:scaleX(1);">6</span>
</figure>
<figure id="chart-inter" style="position:absolute;left:789.2px;top:283px;width:635.8px;height:340px;background:#fff;border:1px solid #9a9a9a;">
<div style="position:absolute;left:102.8px;top:16.6px;width:14px;height:14px;background:#f2545b;border-radius:1.500px;"></div>
<span class="t" style="left:125.6px;top:15.95px;color:#2d3e50;font-size:14.3px;transform:scaleX(0.9978);">Direct Mail</span>
<div style="position:absolute;left:211.5px;top:16.6px;width:14px;height:14px;background:#ff8f59;border-radius:1.500px;"></div>
<span class="t" style="left:234.62px;top:15.95px;color:#2d3e50;font-size:14.3px;transform:scaleX(0.9789);">Linkedin</span>
<div style="position:absolute;left:305.8px;top:16.6px;width:14px;height:14px;background:#f5c26b;border-radius:1.500px;"></div>
<span class="t" style="left:328.82px;top:15.95px;color:#2d3e50;font-size:14.3px;transform:scaleX(0.9776);">Email</span>
<div style="position:absolute;left:382.6px;top:16.6px;width:14px;height:14px;background:#00bda5;border-radius:1.500px;"></div>
<span class="t" style="left:406.8px;top:15.95px;color:#2d3e50;font-size:14.3px;transform:scaleX(0.9406);">Call</span>
<div style="position:absolute;left:448.8px;top:16.6px;width:14px;height:14px;background:#6a78d1;border-radius:1.500px;"></div>
<span class="t" style="left:471.84px;top:15.95px;color:#2d3e50;font-size:14.3px;transform:scaleX(0.9594);">In Person</span>
<i class="hl" style="left:47.8px;top:48.8px;width:568.800px;background:#d5d5d5"></i>
<i class="hl" style="left:47.8px;top:102.8px;width:568.800px;background:#d5d5d5"></i>
<i class="hl" style="left:47.8px;top:210.3px;width:568.800px;background:#d5d5d5"></i>
<i class="hl" style="left:47.8px;top:264px;width:568.800px;background:#d5d5d5"></i>
<div style="position:absolute;left:47.8px;top:156.5px;width:568.8px;height:1px;background:#333;"></div>
<span class="t" style="left:32.05px;top:40.85px;color:#2d3e50;font-size:14.3px;transform:scaleX(1);">1</span>
<span class="t" style="left:32.05px;top:94.85px;color:#2d3e50;font-size:14.3px;transform:scaleX(1);">1</span>
<span class="t" style="left:32.8px;top:148.65px;color:#2d3e50;font-size:14.3px;transform:scaleX(0.875);">–</span>
<span class="t" style="left:23.6px;top:203.35px;color:#2d3e50;font-size:14.3px;transform:scaleX(1.0172);">(1)</span>
<span class="t" style="left:23.6px;top:257.05px;color:#2d3e50;font-size:14.3px;transform:scaleX(1.0172);">(1)</span>
<div style="position:absolute;left:114.8px;top:134.4px;width:7.4px;height:1.2px;background:#f2545b;opacity:.7;"></div>
<div style="position:absolute;left:137px;top:134.4px;width:7.4px;height:1.2px;background:#ff8f59;opacity:.7;"></div>
<div style="position:absolute;left:159.2px;top:134.4px;width:7.4px;height:1.2px;background:#f5c26b;opacity:.7;"></div>
<div style="position:absolute;left:181.4px;top:134.4px;width:7.4px;height:1.2px;background:#00bda5;opacity:.7;"></div>
<div style="position:absolute;left:203.6px;top:134.4px;width:7.4px;height:1.2px;background:#6a78d1;opacity:.7;"></div>
<div style="position:absolute;left:284.5px;top:134.4px;width:7.4px;height:1.2px;background:#f2545b;opacity:.7;"></div>
<div style="position:absolute;left:306.7px;top:134.4px;width:7.4px;height:1.2px;background:#ff8f59;opacity:.7;"></div>
<div style="position:absolute;left:328.9px;top:134.4px;width:7.4px;height:1.2px;background:#f5c26b;opacity:.7;"></div>
<div style="position:absolute;left:351.1px;top:134.4px;width:7.4px;height:1.2px;background:#00bda5;opacity:.7;"></div>
<div style="position:absolute;left:373.3px;top:134.4px;width:7.4px;height:1.2px;background:#6a78d1;opacity:.7;"></div>
<div style="position:absolute;left:454.2px;top:134.4px;width:7.4px;height:1.2px;background:#f2545b;opacity:.7;"></div>
<div style="position:absolute;left:476.4px;top:134.4px;width:7.4px;height:1.2px;background:#ff8f59;opacity:.7;"></div>
<div style="position:absolute;left:498.6px;top:134.4px;width:7.4px;height:1.2px;background:#f5c26b;opacity:.7;"></div>
<div style="position:absolute;left:520.8px;top:134.4px;width:7.4px;height:1.2px;background:#00bda5;opacity:.7;"></div>
<div style="position:absolute;left:543px;top:134.4px;width:7.4px;height:1.2px;background:#6a78d1;opacity:.7;"></div>
<span class="t" style="left:129.3px;top:270.85px;color:#2d3e50;font-size:14.3px;transform:scaleX(1.0369);">7/31/2022</span>
<span class="t" style="left:299.1px;top:270.85px;color:#2d3e50;font-size:14.3px;transform:scaleX(1.04);">8/31/2022</span>
<span class="t" style="left:472.8px;top:270.85px;color:#2d3e50;font-size:14.3px;transform:scaleX(1.0503);">9/6/2022</span>
<span class="t" style="left:288.83px;top:305.85px;color:#2d3e50;font-size:14.3px;transform:scaleX(0.974);">Month Ending</span>
</figure>
</section>
</main>
<footer id="sheet-tabs" style="position:absolute;left:0px;top:836px;width:1591px;height:44px;background:linear-gradient(#f1f3f4,#e4e6e8);">
<svg class="ic" style="left:53.7px;top:17.2px;width:11.8px;height:11.8px;" viewBox="0 0 11.8 11.8"><path fill="#5f6368" d="M4.800 0h2.200v4.800h4.800v2.200H7v4.800H4.800V7H0V4.800h4.800z"/></svg>
<svg class="ic" style="left:89px;top:15.7px;width:14.5px;height:14px;" viewBox="0 0 14.5 14"><path fill="#5f6368" d="M0 0h14.500v2.300H0zM0 3.900h14.500v2.300H0zM0 7.800h14.500v2.300H0zM0 11.700h14.500v2.300H0z"/></svg>
<div style="position:absolute;left:130px;top:0.5px;width:140px;height:43.5px;background:linear-gradient(#f3f4f5,#e7e9ea);border-left:1px solid #e1e3e4;border-bottom:2px solid #e8767a;"></div>
<span class="t" style="left:149.3px;top:16.05px;color:#55585c;font-size:16.9px;transform:scaleX(1.0577);-webkit-text-stroke:.5px #55585c;">Start Here</span>
<svg class="ic" style="left:242.25px;top:21.12px;width:9.5px;height:4.75px;" viewBox="0 0 9.5 4.75"><path fill="#80868b" d="M0 0h9.5l-4.75 4.75z"/></svg>
<div style="position:absolute;left:270px;top:0.5px;width:172.5px;height:43.5px;background:linear-gradient(#f3f4f5,#e7e9ea);border-left:1px solid #e1e3e4;border-bottom:2px solid #f6a77f;"></div>
<span class="t" style="left:290.3px;top:16.05px;color:#55585c;font-size:16.9px;transform:scaleX(1.0793);-webkit-text-stroke:.5px #55585c;">Organizations</span>
<svg class="ic" style="left:413.25px;top:21.12px;width:9.5px;height:4.75px;" viewBox="0 0 9.5 4.75"><path fill="#80868b" d="M0 0h9.5l-4.75 4.75z"/></svg>
<div style="position:absolute;left:442.5px;top:0.5px;width:131.3px;height:43.5px;background:linear-gradient(#f3f4f5,#e7e9ea);border-left:1px solid #e1e3e4;border-bottom:2px solid #f6a77f;"></div>
<span class="t" style="left:461.8px;top:16.05px;color:#55585c;font-size:16.9px;transform:scaleX(1.0905);-webkit-text-stroke:.5px #55585c;">Contacts</span>
<svg class="ic" style="left:545.75px;top:21.12px;width:9.5px;height:4.75px;" viewBox="0 0 9.5 4.75"><path fill="#80868b" d="M0 0h9.5l-4.75 4.75z"/></svg>
<div style="position:absolute;left:573.8px;top:0.5px;width:172.2px;height:43.5px;background:linear-gradient(#f3f4f5,#e7e9ea);border-left:1px solid #e1e3e4;border-bottom:2px solid #f6a77f;"></div>
<span class="t" style="left:593.8px;top:16.05px;color:#55585c;font-size:16.9px;transform:scaleX(1.1218);-webkit-text-stroke:.5px #55585c;">Opportunities</span>
<svg class="ic" style="left:717.25px;top:21.12px;width:9.5px;height:4.75px;" viewBox="0 0 9.5 4.75"><path fill="#80868b" d="M0 0h9.5l-4.75 4.75z"/></svg>
<div style="position:absolute;left:746px;top:0.5px;width:155.3px;height:43.5px;background:linear-gradient(#f3f4f5,#e7e9ea);border-left:1px solid #e1e3e4;border-bottom:2px solid #f6a77f;"></div>
<span class="t" style="left:764.38px;top:16.05px;color:#55585c;font-size:16.9px;transform:scaleX(1.118);-webkit-text-stroke:.5px #55585c;">Interactions</span>
<svg class="ic" style="left:872.25px;top:21.12px;width:9.5px;height:4.75px;" viewBox="0 0 9.5 4.75"><path fill="#80868b" d="M0 0h9.5l-4.75 4.75z"/></svg>
<div style="position:absolute;left:901.3px;top:0.5px;width:146.2px;height:43.5px;background:#fff;box-shadow:0 0 3px rgba(0,0,0,.18);border-bottom:2px solid #7fd1bd;"></div>
<span class="t" style="left:920.24px;top:16.05px;color:#188038;font-size:16.9px;transform:scaleX(1.0586);-webkit-text-stroke:.75px #188038;">Dashboard</span>
<svg class="ic" style="left:1018.75px;top:21.12px;width:9.5px;height:4.75px;" viewBox="0 0 9.5 4.75"><path fill="#188038" d="M0 0h9.5l-4.75 4.75z"/></svg>
<div style="position:absolute;left:1047.5px;top:0.5px;width:150px;height:43.5px;background:linear-gradient(#f3f4f5,#e7e9ea);border-left:1px solid #e1e3e4;border-bottom:2px solid #5e5a86;"></div>
<span class="t" style="left:1066.22px;top:16.05px;color:#55585c;font-size:16.9px;transform:scaleX(1.0799);-webkit-text-stroke:.5px #55585c;">Dropdowns</span>
<svg class="ic" style="left:1169.25px;top:21.12px;width:9.5px;height:4.75px;" viewBox="0 0 9.5 4.75"><path fill="#80868b" d="M0 0h9.5l-4.75 4.75z"/></svg>
<div style="position:absolute;left:1197.5px;top:0.5px;width:1px;height:43.5px;background:#e0e0e0;"></div>
<svg class="ic" style="left:1545.5px;top:12.8px;width:21px;height:24.5px;" viewBox="0 0 21 24.5"><path fill="#5f6368" d="M2.200 0h16.600a2.200 2.200 0 0 1 2.200 2.200v16.600a2.200 2.200 0 0 1-2.200 2.200H13.500L10.500 24.500 7.500 21H2.200A2.200 2.200 0 0 1 0 18.800V2.200A2.200 2.200 0 0 1 2.200 0z"/><path fill="#fff" d="M10.500 3.300c.7 4.300 2.500 6.200 6.800 7-4.300.800-6.100 2.700-6.800 7-.7-4.300-2.500-6.200-6.800-7 4.300-.800 6.100-2.700 6.800-7z"/></svg>
</footer>
<div id="side-rail" style="position:absolute;left:1591px;top:69px;width:9px;height:811px;background:#fff;border-left:1px solid #e3e3e3"></div>
</div>
</body>
</html>
